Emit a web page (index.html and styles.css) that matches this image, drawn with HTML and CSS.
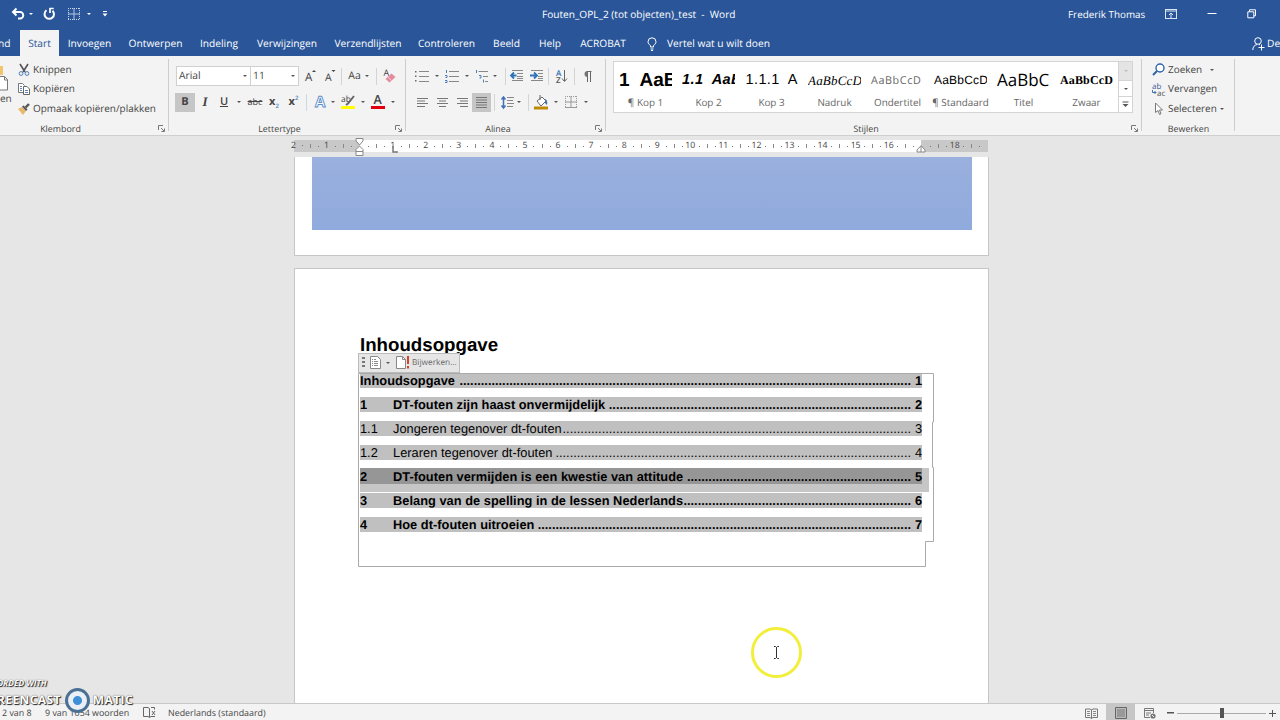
FILE: index.html
```
<!DOCTYPE html>
<html lang="nl">
<head>
    <meta charset="utf-8" />
    <title>Fouten_OPL_2 (tot objecten)_test - Word</title>
    <link rel="stylesheet" href="styles.css">
</head>
<body>
    <!-- title bar -->
    <header class="titlebar">
        <div class="quick">
            <svg width="14" height="14" viewBox="0 0 14 14"><path d="M5.500 1.500L2 5l3.500 3.500M2.500 5H9a3 3 0 0 1 0 6.500H7" fill="none" stroke="#fff" stroke-width="2" /></svg>
            <i class="caret"></i>
            <svg width="14" height="14" viewBox="0 0 14 14"><path d="M4.500 3.300A4.700 4.700 0 1 0 10.500 3.700" fill="none" stroke="#fff" stroke-width="2" /><path d="M7.500 1.500h4.200M8 1v5" fill="none" stroke="#fff" stroke-width="1.700" /></svg>
            <svg width="14" height="14" viewBox="0 0 14 14"><path d="M1 1.500h12M1 12.500h12M1.500 1v12M12.500 1v12" stroke="#c9d6ea" stroke-dasharray="1 1" /><path d="M1 7h12M7 1v12" stroke="#b4c6e2" /></svg>
            <i class="caret"></i>
            <svg width="6" height="8" viewBox="0 0 6 8"><path d="M1 1.500h4" stroke="#fff" /><path d="M0.500 3.500h5L3 6.500z" fill="#fff" /></svg>
        </div>
        <div class="doc-name">Fouten_OPL_2 (tot objecten)_test &nbsp;- &nbsp;Word</div>
        <div class="user">Frederik Thomas</div>
        <div class="window-buttons">
            <svg width="12" height="10" viewBox="0 0 12 10"><rect x="0.500" y="0.500" width="11" height="9" fill="none" stroke="#dce5f2" /><path d="M1 2h10M6 9V4M4 6l2-2 2 2" fill="none" stroke="#dce5f2" /></svg>
            <svg width="10" height="10" viewBox="0 0 10 10"><path d="M0.500 4.500h9" stroke="#fff" /></svg>
            <svg width="10" height="10" viewBox="0 0 10 10"><path d="M0.800 2.800h6v6h-6zM2.500 2.500V0.800h6v6H7" fill="none" stroke="#fff" /></svg>
        </div>
    </header>

    <!-- ribbon tabs -->
    <nav class="tabs">
        <a class="file">nd</a>
        <a class="active">Start</a>
        <a>Invoegen</a>
        <a>Ontwerpen</a>
        <a>Indeling</a>
        <a>Verwijzingen</a>
        <a>Verzendlijsten</a>
        <a>Controleren</a>
        <a>Beeld</a>
        <a>Help</a>
        <a>ACROBAT</a>
        <span class="tell">
            <svg width="10" height="14" viewBox="0 0 10 14"><path d="M3.500 10V8.500C2 7.500 1 6.300 1 4.800a4 4 0 0 1 8 0C9 6.300 8 7.500 6.500 8.500V10zM3.500 12h3M4 13.500h2" fill="none" stroke="#fff" /></svg>
            Vertel wat u wilt doen
        </span>
        <span class="share">
            <svg width="13" height="14" viewBox="0 0 13 14"><circle cx="6" cy="4" r="3.300" fill="none" stroke="#fff" /><path d="M0.800 13c0-3 1.700-5 4.200-5.500M7 7.300l1 .7M9.500 7.500v6M6.500 10.500h6" fill="none" stroke="#fff" /></svg>
            De
        </span>
    </nav>

    <!-- ribbon -->
    <section class="ribbon">
        <div class="group clipboard">
            <div class="group-body">
                <div class="paste">
                    <svg width="9" height="26" viewBox="0 0 9 26"><path d="M0 0h3v9H0z" fill="#f2c46d" /><path d="M0 10.500h4.500l3 3V24H0" fill="#fff" stroke="#777" /><path d="M4.500 10.500v3.500h3" fill="none" stroke="#777" /></svg>
                    <span>en</span>
                </div>
                <div class="commands">
                    <div class="command">
                        <svg width="12" height="12" viewBox="0 0 12 12"><path d="M2 0l5 8M10 0L5 8" stroke="#555" stroke-width="1.600" /><circle cx="3" cy="9.500" r="1.900" fill="none" stroke="#4d7db8" /><circle cx="9" cy="9.500" r="1.900" fill="none" stroke="#4d7db8" /></svg>
                        <span>Knippen</span>
                    </div>
                    <div class="command">
                        <svg width="12" height="12" viewBox="0 0 12 12"><path d="M5 9.500H.5v-9h4l2 2" fill="#fff" stroke="#777" /><path d="M5.500 3.500H9l2.500 2.500v5.500h-6z" fill="#fff" stroke="#666" /><path d="M2 3.500h2M2 5.500h2M2 7.500h2M7 7.500h3M7 9.500h3" stroke="#5b86b8" /></svg>
                        <span>Kopiëren</span>
                    </div>
                    <div class="command">
                        <svg width="12" height="12" viewBox="0 0 12 12"><path d="M0 6l4-2 4 4-3 4z" fill="#e9b96b" /><path d="M4 3.500l1.500-1 4 4L8 8z" fill="#555" /><path d="M7.500 4.500L11 1" stroke="#555" stroke-width="2.400" /></svg>
                        <span>Opmaak kopiëren/plakken</span>
                    </div>
                </div>
            </div>
            <div class="group-title">Klembord</div>
            <svg class="launcher" width="7" height="7" viewBox="0 0 7 7"><path d="M0.500 5V.5H5M3 3l3 3M6.500 3.500v3h-3" fill="none" stroke="#777" /></svg>
        </div>

        <div class="group font">
            <div class="group-body">
                <div class="row row-one">
                    <div class="combo">Arial<i class="caret"></i></div>
                    <div class="combo size">11<i class="caret"></i></div>
                    <svg width="12" height="14" viewBox="0 0 12 14"><text x="1" y="11.500" class="glyph">A</text><path d="M8 3l2-2 2 2z" fill="#444" /></svg>
                    <svg width="12" height="14" viewBox="0 0 12 14"><text x="1" y="11.500" class="glyph small">A</text><path d="M7.500 1h4l-2 2z" fill="#444" /></svg>
                    <i class="sep"></i>
                    <span class="case">Aa<i class="caret"></i></span>
                    <i class="sep"></i>
                    <svg width="13" height="14" viewBox="0 0 13 14"><text x="0.500" y="7" class="glyph tiny">A</text><path d="M2.500 10l6-5.500L12.500 8l-6 5.500z" fill="#e58b9c" /><path d="M4.800 8l3.800 3.600" stroke="#f6ccd3" /></svg>
                </div>
                <div class="row row-two">
                    <span class="pressed bold">B</span>
                    <span class="italic">I</span>
                    <span class="underline">U</span>
                    <i class="caret"></i>
                    <span class="strike">abc</span>
                    <span class="script">x<sub>2</sub></span>
                    <span class="script">x<sup>2</sup></span>
                    <i class="sep blue"></i>
                    <svg width="13" height="14" viewBox="0 0 13 14"><text x="1" y="12" class="effect">A</text></svg>
                    <i class="caret"></i>
                    <svg width="16" height="16" viewBox="0 0 16 16"><text x="1" y="7.500" class="marker">ab</text><path d="M14 2L8 9.500 6 11" fill="none" stroke="#666" stroke-width="2" /><path d="M1 12h14v3H1z" fill="#ff0" /></svg>
                    <i class="caret"></i>
                    <svg width="14" height="16" viewBox="0 0 14 16"><text x="2.500" y="10" class="glyph dark">A</text><path d="M0 12h14v3H0z" fill="#e00010" /></svg>
                    <i class="caret"></i>
                </div>
            </div>
            <div class="group-title">Lettertype</div>
            <svg class="launcher" width="7" height="7" viewBox="0 0 7 7"><path d="M0.500 5V.5H5M3 3l3 3M6.500 3.500v3h-3" fill="none" stroke="#777" /></svg>
        </div>

        <div class="group paragraph">
            <div class="group-body">
                <div class="row row-one">
                    <svg width="14" height="12" viewBox="0 0 14 12"><path d="M0 1h1.500v1.500H0zM0 5.500h1.500V7H0zM0 10h1.500v1.500H0z" fill="#5d6f87" /><path d="M4 1.500h10M4 6.500h10M4 11.500h10" stroke="#888" /></svg>
                    <i class="caret"></i>
                    <svg width="14" height="13" viewBox="0 0 14 13"><path d="M1.500 0v3M0 5.500h2v2H.5M0 10.500h2v2H0" fill="none" stroke="#4d7db8" /><path d="M4 1.500h10M4 6.500h10M4 11.500h10" stroke="#888" /></svg>
                    <i class="caret"></i>
                    <svg width="14" height="13" viewBox="0 0 14 13"><path d="M1.500 0v3M4 5.500h2v2.500H4.500M8.500 9.500v3" fill="none" stroke="#4d7db8" /><path d="M3.500 1.500H13M8 6.500h5M10 11.500h3" stroke="#888" /></svg>
                    <i class="caret"></i>
                    <i class="sep end"></i>
                    <svg width="13" height="12" viewBox="0 0 13 12"><path d="M2 .5h11M7 3.500h6M7 6.500h6M2 10.500h11M7 8.500h6" stroke="#888" /><path d="M6.500 5.500h-5M4 2.500l-3 3 3 3" fill="none" stroke="#2f72b8" stroke-width="1.800" /></svg>
                    <svg width="13" height="12" viewBox="0 0 13 12"><path d="M1 .5h12M8 3.500h5M8 6.500h5M1 10.500h12M8 8.500h5" stroke="#888" /><path d="M0 5.500h6M4 2.500l3 3-3 3" fill="none" stroke="#2f72b8" stroke-width="1.800" /></svg>
                    <i class="sep"></i>
                    <svg width="13" height="14" viewBox="0 0 13 14"><text x="1" y="6.500" class="sort-a">A</text><text x="1" y="13.500" class="sort-z">Z</text><path d="M9.500 1v11M7 9.500l2.500 3 2.500-3" fill="none" stroke="#666" /></svg>
                    <i class="sep"></i>
                    <svg width="9" height="11" viewBox="0 0 9 11"><path d="M4 .5h4.500M4.500 0v11M7.500 0v11" stroke="#666" fill="none" /><path d="M4.500 0a2.800 2.800 0 0 0 0 6z" fill="#777" /></svg>
                </div>
                <div class="row row-two">
                    <svg width="11" height="9" viewBox="0 0 11 9"><path d="M0 .5h11M0 3h8M0 5.500h11M0 8.500h8" stroke="#777" /></svg>
                    <svg width="11" height="9" viewBox="0 0 11 9"><path d="M0 .5h11M2 3h7M0 5.500h11M2 8.500h7" stroke="#777" /></svg>
                    <svg width="11" height="9" viewBox="0 0 11 9"><path d="M0 .5h11M3 3h8M0 5.500h11M3 8.500h8" stroke="#777" /></svg>
                    <span class="pressed"><svg width="11" height="11" viewBox="0 0 11 11"><path d="M0 .5h11M0 3h11M0 5.500h11M0 8h11M0 10.500h11" stroke="#777" /></svg></span>
                    <i class="sep"></i>
                    <svg width="13" height="13" viewBox="0 0 13 13"><path d="M2.500 1v11M.5 3.500L2.500 1l2 2.500M.5 9.500l2 2.500 2-2.500" fill="none" stroke="#4472b8" stroke-width="1.500" /><path d="M6 1.500h7M6 4.500h6M6 7.500h7M6 10.500h6" stroke="#888" /></svg>
                    <i class="caret"></i>
                    <i class="sep"></i>
                    <svg width="15" height="15" viewBox="0 0 15 15"><path d="M3 6l5-4 4 4-5 5z" fill="#fff" stroke="#666" /><path d="M6 0v5" stroke="#666" /><path d="M11 4q3 1 2 6l-2-2" fill="#4472a8" /><path d="M0 11.500h14v3H0z" fill="#bf8a00" /></svg>
                    <i class="caret"></i>
                    <svg width="12" height="12" viewBox="0 0 12 12"><path d="M.5 0v12M11.500 0v12M0 .5h12" stroke="#999" stroke-dasharray="1 1" /><path d="M6 0v12M0 6h12M0 11.500h12" stroke="#999" /></svg>
                    <i class="caret"></i>
                </div>
            </div>
            <div class="group-title">Alinea</div>
            <svg class="launcher" width="7" height="7" viewBox="0 0 7 7"><path d="M0.500 5V.5H5M3 3l3 3M6.500 3.500v3h-3" fill="none" stroke="#777" /></svg>
        </div>

        <div class="group styles">
            <div class="group-body">
                <div class="gallery">
                    <div class="style"><span class="sample kop1">1&nbsp; AaBb</span><span class="name">¶ Kop 1</span></div>
                    <div class="style"><span class="sample kop2">1.1&nbsp; AaBb</span><span class="name">Kop 2</span></div>
                    <div class="style"><span class="sample kop3">1.1.1&nbsp; Aa</span><span class="name">Kop 3</span></div>
                    <div class="style"><span class="sample nadruk">AaBbCcDc</span><span class="name">Nadruk</span></div>
                    <div class="style"><span class="sample ondertitel">AaBbCcD</span><span class="name">Ondertitel</span></div>
                    <div class="style"><span class="sample standaard">AaBbCcDc</span><span class="name">¶ Standaard</span></div>
                    <div class="style"><span class="sample titel">AaBbC</span><span class="name">Titel</span></div>
                    <div class="style"><span class="sample zwaar">AaBbCcDc</span><span class="name">Zwaar</span></div>
                    <div class="scroll">
                        <span class="off"><i class="caret"></i></span>
                        <span><i class="caret"></i></span>
                        <span><svg width="7" height="7" viewBox="0 0 7 7"><path d="M.5 1h6" stroke="#555" /><path d="M.5 3h6l-3 3z" fill="#555" /></svg></span>
                    </div>
                </div>
            </div>
            <div class="group-title">Stijlen</div>
            <svg class="launcher" width="7" height="7" viewBox="0 0 7 7"><path d="M0.500 5V.5H5M3 3l3 3M6.500 3.500v3h-3" fill="none" stroke="#777" /></svg>
        </div>

        <div class="group editing">
            <div class="group-body commands">
                <div class="command">
                    <svg width="13" height="13" viewBox="0 0 13 13"><circle cx="8" cy="5" r="4" fill="#fff" stroke="#2f64a8" stroke-width="1.400" /><path d="M5 8l-4 4" stroke="#2f64a8" stroke-width="2" /></svg>
                    <span>Zoeken</span><i class="caret far"></i>
                </div>
                <div class="command">
                    <svg width="13" height="13" viewBox="0 0 13 13"><text x="0" y="5.500" class="ab">ab</text><text x="5" y="12.500" class="ac">ac</text><path d="M.5 7v2.500H4M2.500 8L4 9.500 2.500 11" fill="none" stroke="#3d72b8" /></svg>
                    <span>Vervangen</span>
                </div>
                <div class="command">
                    <svg width="13" height="13" viewBox="0 0 13 13"><path d="M3.500 1v9.500L6 8.500l1.500 4 1.500-.7L7.500 8h3z" fill="#fff" stroke="#777" /></svg>
                    <span>Selecteren</span><i class="caret"></i>
                </div>
            </div>
            <div class="group-title">Bewerken</div>
        </div>
    </section>

    <!-- document area -->
    <main class="workspace">
        <div class="ruler">
            <ul>
                <li class="first">2</li><li>1</li><li></li><li>1</li><li>2</li><li>3</li><li>4</li><li>5</li><li>6</li><li>7</li><li>8</li><li>9</li><li>10</li><li>11</li><li>12</li><li>13</li><li>14</li><li>15</li><li>16</li><li></li><li>18</li><li class="last"></li>
            </ul>
            <svg class="indent-left" width="9" height="18" viewBox="0 0 9 18"><path d="M1 .5h7V3L4.500 7 1 3zM4.500 8L8 11.500v6H1v-6zM1 13.500h7" fill="#fff" stroke="#888" /></svg>
            <svg class="tab-stop" width="6" height="7" viewBox="0 0 6 7"><path d="M1 0v6h5" fill="none" stroke="#777" stroke-width="1.500" /></svg>
            <svg class="indent-right" width="10" height="8" viewBox="0 0 10 8"><path d="M5 .7L9 5v2H1V5zM5 1v6" fill="#fff" stroke="#888" /></svg>
        </div>

        <div class="page cover"><div class="banner"></div></div>

        <div class="page toc-page">
            <h1>Inhoudsopgave</h1>
            <div class="toc">
                <div class="toc-bar">
                    <svg width="5" height="11" viewBox="0 0 5 11"><path d="M1 0h3v2H1zM1 4h3v2H1zM1 8h3v2H1z" fill="#777" /></svg>
                    <svg class="sheet" width="11" height="13" viewBox="0 0 11 13"><path d="M.5.5h7l3 3v9H.5z" fill="#fff" stroke="#888" /><path d="M2 3.500h4M2 5.500h7M2 7.500h7M2 9.500h7" stroke="#888" stroke-dasharray="1 1 4 1" /></svg>
                    <i class="caret"></i>
                    <svg class="update" width="14" height="13" viewBox="0 0 14 13"><path d="M.5.5h6l3 3v9H.5z" fill="#fff" stroke="#888" /><path d="M6.500.5v3h3" fill="none" stroke="#888" /><path d="M12 0v8M12 10v2.500" stroke="#d9402a" stroke-width="2" /></svg>
                    <span>Bijwerken...</span>
                </div>
                <ol>
                    <li class="strong"><span>Inhoudsopgave</span><em>...............................................................................................................................</em><b>1</b></li>
                    <li class="strong"><i>1</i><span>DT-fouten zijn haast onvermijdelijk</span><em>.....................................................................................</em><b>2</b></li>
                    <li><i>1.1</i><span>Jongeren tegenover dt-fouten</span><em>..................................................................................................</em><b>3</b></li>
                    <li><i>1.2</i><span>Leraren tegenover dt-fouten</span><em>....................................................................................................</em><b>4</b></li>
                    <li class="strong selected"><i>2</i><span>DT-fouten vermijden is een kwestie van attitude</span><em>...............................................................</em><b>5</b></li>
                    <li class="strong"><i>3</i><span>Belang van de spelling in de lessen Nederlands</span><em>................................................................</em><b>6</b></li>
                    <li class="strong"><i>4</i><span>Hoe dt-fouten uitroeien</span><em>.........................................................................................................</em><b>7</b></li>
                </ol>
                <svg class="frame" width="577" height="195" viewBox="0 0 577 195"><path d="M.5.500H575.500V49H574.500V94.500H575.500V168.500H567.500V193.500H.5z" fill="none" stroke="#aaa" /></svg>
            </div>
        </div>
    </main>

    <!-- status bar -->
    <footer class="status">
        <span class="pages">2 van 8</span>
        <span class="words">9 van 1054 woorden</span>
        <svg width="13" height="11" viewBox="0 0 13 11"><path d="M6.500 10V1.500L5 .5H.5v9H5l1.500 1 1.500-1h4M8 .5h3.500v2M9 4l3 4M12 4L9 8" fill="none" stroke="#666" /></svg>
        <span class="language">Nederlands (standaard)</span>
        <div class="views">
            <span><svg width="13" height="11" viewBox="0 0 13 11"><path d="M6.500 1.500v9M.5 1H5l1.500 1L8 1h4.500v8.500H8l-1.500 1-1.500-1H.5z" fill="none" stroke="#777" /><path d="M2 3.500h3M2 5.500h3M2 7.500h3M8 3.500h3M8 5.500h3M8 7.500h3" stroke="#888" /></svg></span>
            <span class="on"><svg width="12" height="12" viewBox="0 0 12 12"><path d="M.5.5h11v11H.5z" fill="#bbb" stroke="#666" /><path d="M2 3h8M2 5h8M2 7h8M2 9h8" stroke="#777" /></svg></span>
            <span><svg width="12" height="11" viewBox="0 0 12 11"><path d="M6 9.500H.5v-9h9V5M.5 2.500h9M2 5h5M2 7h3" fill="none" stroke="#777" /><circle cx="9" cy="8" r="2.600" fill="#777" /><path d="M8 7l2 2" stroke="#eee" /></svg></span>
        </div>
        <div class="zoom"><i class="minus"></i><i class="track"><i class="thumb"></i></i><i class="plus"></i></div>
    </footer>

    <div class="watermark">
        <div class="recorded">ORDED WITH</div>
        <div class="brand"><span>REENCAST</span><i class="lens"></i><span>MATIC</span></div>
    </div>
    <div class="pointer">
        <svg width="7" height="13" viewBox="0 0 7 13"><path d="M1 .5h1.500l1 1 1-1H6M3.500 1v11M1 12.500h1.500l1-1 1 1H6" fill="none" stroke="#333" /></svg>
    </div>
</body>
</html>
```
FILE: styles.css
```
* {
    box-sizing: border-box;
}

body {
    margin: 0;
    width: 1280px;
    height: 720px;
    overflow: hidden;
    position: relative;
    display: flex;
    flex-direction: column;
    background: #e6e6e6;
    font: 11px/14px "Open Sans", "Noto Sans", sans-serif;
    color: #444;
    text-rendering: geometricPrecision;
}

ul, ol, h1 {
    margin: 0;
    padding: 0;
    list-style: none;
}

i, em {
    font-style: normal;
}

svg {
    display: block;
    flex: none;
    overflow: visible;
}

.caret {
    width: 0;
    height: 0;
    border: 2.5px solid transparent;
    border-top-color: #555;
    border-bottom: 0;
}

/* title bar */
.titlebar {
    height: 30px;
    flex: none;
    display: flex;
    align-items: center;
    background: #2a5699;
    color: #fff;
    font-size: 10.1px;
    padding-bottom: 2px;
}

    .titlebar .caret {
        border-top-color: #fff;
    }

.quick {
    width: 542px;
    display: grid;
    grid-template-columns: 14px 11px 25px 26px 3px 30px;
    align-items: center;
    justify-items: center;
    padding-left: 11px;
}

.doc-name {
    width: 526px;
    padding-bottom: 1px;
    white-space: nowrap;
}

.user {
    width: 97px;
    padding-bottom: 1px;
    font-size: 9.9px;
    white-space: nowrap;
}

.window-buttons {
    display: flex;
    gap: 30px;
}

/* tabs */
.tabs {
    height: 26px;
    flex: none;
    display: grid;
    grid-template-columns: 20px 39px 61px 71px 56px 80px 82px 75px 45px 42px 64px 1fr 28px;
    background: #2a5699;
    color: #fff;
    font-size: 10.2px;
    line-height: 27px;
    text-align: center;
    white-space: nowrap;
}

    .tabs .file {
        text-align: left;
        text-indent: -2px;
    }

    .tabs .active {
        background: #f3f3f3;
        color: #2a5699;
    }

.tell, .share {
    display: flex;
    align-items: center;
}

.tell {
    padding-left: 12px;
    gap: 10px;
}

.share {
    gap: 2px;
}

/* ribbon */
.ribbon {
    height: 80px;
    flex: none;
    display: flex;
    background: #f3f3f3;
    border-bottom: 1px solid #cfcfcf;
}

.group {
    position: relative;
    padding-top: 4px;
}

    .group::after {
        content: "";
        position: absolute;
        right: 0;
        top: 3px;
        bottom: 4px;
        width: 1px;
        background: #cdcdcd;
    }

.clipboard { width: 169px; }
.font { width: 237px; }
.paragraph { width: 200px; }
.styles { width: 536px; }
.editing { width: 93px; }

.group-body {
    height: 61px;
}

.group-title {
    font-size: 8.9px;
    line-height: 15px;
    text-align: center;
    color: #444;
}

.clipboard .group-title {
    padding-right: 48px;
}

.font .group-title {
    padding-right: 16px;
}

.paragraph .group-title {
    padding-right: 16px;
}

.styles .group-title {
    padding-right: 16px;
}

.launcher {
    position: absolute;
    right: 4px;
    bottom: 3px;
}

.clipboard .group-body {
    display: flex;
}

.paste {
    width: 18px;
    padding-top: 6px;
    line-height: 12px;
    font-size: 10px;
}

.commands {
    display: flex;
    flex-direction: column;
}

.command {
    height: 19.5px;
    display: flex;
    align-items: center;
    gap: 3px;
    font-size: 9.95px;
    white-space: nowrap;
}

    .command span {
        padding-bottom: 2px;
    }

    .command .caret.far {
        margin-left: 5px;
    }

.editing .commands {
    padding-left: 10px;
}

.editing .group-body {
    height: 61px;
    padding-left: 10px;
}

.row {
    display: grid;
    align-items: center;
    justify-items: center;
}

.font .group-body {
    padding: 6px 0 0 6px;
}

.row-one {
    height: 20px;
}

.row-two {
    height: 20px;
    margin-top: 6px;
}

.font .row-one {
    margin-left: 1px;
    grid-template-columns: 75px 48px 22px 18px 4px 31px 4px 22px;
}

.font .row-two {
    grid-template-columns: 20px 20px 18px 12px 20px 18px 21px 5px 22px 4px 26px 4px 26px 4px;
}

.paragraph .group-body {
    padding: 6px 0 0 5px;
}

.paragraph .row-one {
    grid-template-columns: 22px 8px 22px 8px 21px 5px 9px 20px 20px 4px 23px 3px 22px;
}

.paragraph .row-two {
    margin-left: 1px;
    grid-template-columns: 20px 20px 20px 19px 7px 18px 6px 13px 13px 16px 14px 16px;
}

.combo {
    width: 100%;
    height: 20px;
    display: flex;
    align-items: center;
    justify-content: space-between;
    padding: 0 3px 0 2px;
    background: #fff;
    border: 1px solid #d0d0d0;
    font-size: 10.3px;
}

    .combo.size {
        border-left: 0;
    }

.sep {
    width: 1px;
    height: 17px;
    background: #d4d4d4;
}

    .sep.end {
        justify-self: end;
    }

    .sep.blue {
        background: #cbd8e8;
    }

.case {
    display: flex;
    align-items: center;
    gap: 4px;
    font-size: 10.5px;
    line-height: 13px;
}

.pressed {
    width: 100%;
    height: 19px;
    display: flex;
    align-items: center;
    justify-content: center;
    background: #c6c6c6;
}

.bold {
    font-weight: bold;
    font-size: 11px;
}

.italic {
    font: italic bold 13px "Liberation Serif", serif;
}

.underline {
    font-weight: 600;
    text-decoration: underline;
}

.strike {
    font-size: 9px;
    text-decoration: line-through;
}

.script {
    font-weight: bold;
    font-size: 11px;
    white-space: nowrap;
}

    .script sub, .script sup {
        font-size: 6px;
        font-weight: 600;
        line-height: 0;
        color: #4d7db8;
    }

.glyph {
    font-size: 11.5px;
    fill: #444;
}

    .glyph.small { font-size: 10.5px; }
    .glyph.tiny { font-size: 9px; }
    .glyph.dark { font-weight: 600; font-size: 12.5px; }

.effect {
    font-size: 15px;
    font-weight: bold;
    fill: #fff;
    stroke: #5b8fcf;
    stroke-width: .9px;
}

.marker {
    font-size: 8.5px;
    fill: #444;
}

.sort-a, .sort-z {
    font-size: 8px;
    font-weight: 600;
    fill: #2f72b8;
}

.sort-z { fill: #555; }

.ab, .ac {
    font-size: 8px;
    fill: #3f5f95;
}

.ac { fill: #555; }

/* style gallery */
.styles .group-body {
    padding: 1px 0 0 7px;
}

.gallery {
    width: 520px;
    height: 52px;
    display: grid;
    grid-template-columns: repeat(8, 63px) 14px;
    background: #fff;
    border: 1px solid #d4d4d4;
}

.style {
    display: flex;
    flex-direction: column;
    align-items: center;
    padding-top: 7px;
}

.sample {
    width: 53px;
    height: 23px;
    overflow: hidden;
    white-space: nowrap;
    line-height: 23px;
    color: #000;
}

.name {
    line-height: 20px;
    font-size: 9.9px;
    color: #666;
    white-space: nowrap;
}

.kop1 { font: bold 19px/23px "Liberation Sans", sans-serif; width: 53px; }
.kop2 { font: italic bold 14.5px/23px "Liberation Sans", sans-serif; letter-spacing: .4px; width: 53px; }
.kop3 { font: 14.500px/23px "Liberation Sans", sans-serif; letter-spacing: .4px; width: 52px; }
.nadruk { font: italic 13px/23px "Liberation Serif", serif; letter-spacing: .2px; }
.ondertitel { font-size: 10.8px; color: #666; letter-spacing: .6px; }
.standaard { font: 12px/23px "Liberation Sans", sans-serif; letter-spacing: .2px; }
.titel { font-size: 17px; line-height: 21px; }
.zwaar { font: bold 12px/23px "Liberation Serif", serif; letter-spacing: .15px; }

.scroll {
    display: grid;
    grid-template-rows: 18px 16px 16px;
    border-left: 1px solid #d4d4d4;
}

    .scroll span {
        display: flex;
        align-items: center;
        justify-content: center;
        border-top: 1px solid #d4d4d4;
    }

    .scroll .off {
        border-top: 0;
        background: #e4e4e4;
    }

    .scroll .off .caret {
        border-top-color: #bbb;
    }

/* document */
.workspace {
    flex: 1;
    min-height: 0;
    overflow: hidden;
    background: #e6e6e6;
}

.ruler {
    position: relative;
    width: 694px;
    height: 12px;
    margin: 4px 0 5px 294px;
    background: linear-gradient(90deg, #c8c8c8 66px, #fff 66px, #fff 627px, #c8c8c8 627px);
}

    .ruler ul {
        display: flex;
        margin-left: -17px;
    }

    .ruler li {
        flex: none;
        width: 33.07px;
        height: 12px;
        font-size: 8.7px;
        line-height: 11px;
        text-align: center;
        background: linear-gradient(#888, #888) 0 4px / 1px 4px no-repeat, linear-gradient(#777, #777) 8px 5.500px / 1px 1px no-repeat, linear-gradient(#777, #777) 25px 5.500px / 1px 1px no-repeat;
    }

    .ruler .first {
        background: linear-gradient(#777, #777) 25px 5px / 1px 1px no-repeat;
    }

    .ruler .last {
        width: 10px;
    }

.indent-left {
    position: absolute;
    left: 61px;
    top: -2px;
}

.tab-stop {
    position: absolute;
    left: 98px;
    top: 6px;
}

.indent-right {
    position: absolute;
    left: 622px;
    top: 5px;
}

.page {
    width: 695px;
    margin-left: 294px;
    background: #fff;
    border: 1px solid #c6c6c6;
}

.cover {
    height: 99px;
    border-top: 0;
    padding: 0 17px;
}

.banner {
    height: 73px;
    width: 660px;
    background: linear-gradient(#9ab0de, #8faadc);
}

.toc-page {
    height: 450px;
    margin-top: 12px;
    padding: 64px 0 0 65px;
    color: #000;
    font-family: "Liberation Sans", Arial, sans-serif;
}

    .toc-page h1 {
        font-size: 18.7px;
        line-height: 24px;
    }

.toc {
    position: relative;
    margin-top: -4px;
}

.toc-bar {
    width: 102px;
    height: 20px;
    margin-left: -2px;
    display: flex;
    align-items: center;
    padding: 0 0 1px 2px;
    background: #e6e6e6;
    border: 1px solid #bbb;
    color: #666;
    font: 8.3px/16px "Open Sans", sans-serif;
    white-space: nowrap;
}

    .toc-bar .sheet { margin: 0 5px 0 4px; }
    .toc-bar .update { margin: 0 2px 0 6px; }

.toc li {
    width: 562px;
    height: 15px;
    margin-bottom: 9px;
    display: flex;
    background: #c0c0c0;
    font-size: 12.8px;
    line-height: 15px;
    white-space: nowrap;
}

.toc li.strong {
    font-weight: bold;
}

.toc li i {
    width: 33px;
}

.toc li span {
    letter-spacing: .03px;
}

.toc li em {
    margin-left: auto;
}

.toc li b {
    width: 11px;
    text-align: right;
    font-weight: inherit;
}

.toc li.selected {
    height: 16px;
    margin: -1px 0 9px;
    line-height: 17px;
    background: #969696;
    box-shadow: 0 8px 0 #c6c6c6, 7px 0 0 #c6c6c6, 7px 8px 0 #c6c6c6;
}

.frame {
    position: absolute;
    left: -2px;
    top: 20px;
}

/* status bar */
.status {
    height: 17px;
    flex: none;
    display: flex;
    align-items: center;
    padding-left: 2px;
    background: #f3f3f3;
    border-top: 1px solid #c8c8c8;
    font-size: 8.9px;
    line-height: 18px;
    white-space: nowrap;
}

    .status .pages { width: 43px; }
    .status .words { width: 98px; }
    .status .language { margin-left: 12px; }

    .status span {
        padding-top: 2px;
    }

.views {
    margin-left: auto;
    display: flex;
}

    .views span {
        width: 29px;
        height: 18px;
        display: flex;
        align-items: center;
        justify-content: center;
    }

    .views .on {
        background: #c6c6c6;
    }

.zoom {
    width: 116px;
    display: flex;
    align-items: center;
    padding: 2px 4px 0 3px;
    gap: 3px;
}

.minus, .plus {
    width: 7px;
    height: 7px;
    background: linear-gradient(#555, #555) center / 7px 1.500px no-repeat;
}

.plus {
    background: linear-gradient(#555, #555) center / 7px 1px no-repeat, linear-gradient(#555, #555) center / 1px 7px no-repeat;
}

.track {
    flex: 1;
    height: 1px;
    display: flex;
    align-items: center;
    justify-content: center;
    background: #aaa;
}

.thumb {
    width: 4px;
    height: 10px;
    flex: none;
    background: #555;
}

/* overlays */
.watermark {
    position: absolute;
    left: -3px;
    top: 679px;
    color: #fff;
    font-weight: bold;
    text-shadow: 1px 1px 1px #222, 0 0 1px #333;
    white-space: nowrap;
}

.recorded {
    font-size: 8.4px;
    line-height: 10px;
    font-style: italic;
}

.brand {
    height: 22px;
    display: flex;
    align-items: center;
    font-size: 12px;
    letter-spacing: .4px;
}

.lens {
    width: 25px;
    height: 25px;
    margin: 0 3px 0 4px;
    border: 3px solid #4a7194;
    border-radius: 50%;
    background: radial-gradient(#3f8fd8 4px, #e9eff4 5px);
}

.pointer {
    position: absolute;
    left: 751px;
    top: 627px;
    width: 51px;
    height: 51px;
    display: flex;
    align-items: center;
    justify-content: center;
    border: 3px solid #f2ee3c;
    border-radius: 50%;
}
```
